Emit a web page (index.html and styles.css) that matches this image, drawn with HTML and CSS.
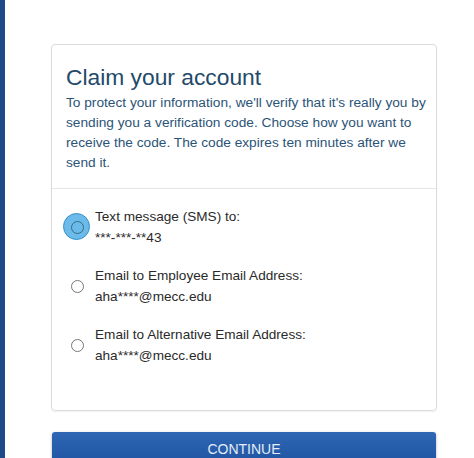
FILE: index.html
```html
<!DOCTYPE html>
<html lang="en">
<head>
  <meta charset="UTF-8" />
  <title>Claim your account</title>
  <link rel="stylesheet" href="styles.css">
</head>
<body>
  <div class="page">
    <div class="side"></div>
    <div class="main">
      <div class="card">
        <div class="card-head">
          <h1>Claim your account</h1>
          <p>To protect your information, we'll verify that it's really you by sending you a verification code. Choose how you want to receive the code. The code expires ten minutes after we send it.</p>
        </div>
        <div class="card-body">
          <label class="option">
            <span class="radio focused"><span class="dot"></span></span>
            <span class="text">Text message (SMS) to:<br>***-***-**43</span>
          </label>
          <label class="option">
            <span class="radio"><span class="dot"></span></span>
            <span class="text">Email to Employee Email Address:<br>aha****@mecc.edu</span>
          </label>
          <label class="option">
            <span class="radio"><span class="dot"></span></span>
            <span class="text">Email to Alternative Email Address:<br>aha****@mecc.edu</span>
          </label>
        </div>
      </div>
      <button class="continue">CONTINUE</button>
    </div>
  </div>
</body>
</html>
```

FILE: styles.css
```css
body {
  margin: 0;
  font-family: "Liberation Sans", Arial, sans-serif;
  background: #fff;
  overflow: hidden;
}
.page {
  display: flex;
  height: 458px;
}
.side {
  width: 5px;
  background: #1d4a86;
}
.main {
  margin-left: 46px;
  width: 386px;
  padding-top: 44px;
}
.card {
  border: 1px solid #dcdcdc;
  border-radius: 4px;
  box-shadow: 0 1px 2px rgba(0,0,0,0.06);
  height: 365px;
}
.card-head {
  padding: 19px 10px 15px 14px;
  border-bottom: 1px solid #e6e6e6;
}
h1 {
  margin: 0 0 3px 0;
  font-size: 22.8px;
  font-weight: normal;
  color: #1f4a6a;
  line-height: 26px;
}
.card-head p {
  margin: 0;
  font-size: 13.7px;
  line-height: 20px;
  color: #2b5477;
}
.card-body {
  padding: 18px 0 0 0;
}
.option {
  display: flex;
  align-items: center;
  height: 40px;
  margin-bottom: 19px;
  font-size: 13.6px;
  line-height: 21px;
  color: #2a2a2a;
}
.radio {
  position: relative;
  width: 11px;
  height: 11px;
  border: 1.5px solid #777;
  border-radius: 50%;
  margin: 0 11px 0 19px;
  flex: none;
}
.radio.focused {
  border-color: #3b6a80;
}
.radio.focused::before {
  content: "";
  position: absolute;
  left: -9px;
  top: -9px;
  width: 27px;
  height: 27px;
  border-radius: 50%;
  background: rgba(80,175,230,0.85);
  border: 1px solid #3590c8;
  box-sizing: border-box;
  z-index: -1;
}
.continue {
  display: block;
  margin: 21px 0 0 1px;
  width: 384px;
  height: 34px;
  border: none;
  border-radius: 3px;
  background: linear-gradient(#2f67b4, #1e53a0);
  color: #e4ecf6;
  font-family: "Liberation Sans", Arial, sans-serif;
  font-size: 14px;
  padding: 0;
  box-shadow: 0 1px 3px rgba(0,0,0,0.3);
}
```
